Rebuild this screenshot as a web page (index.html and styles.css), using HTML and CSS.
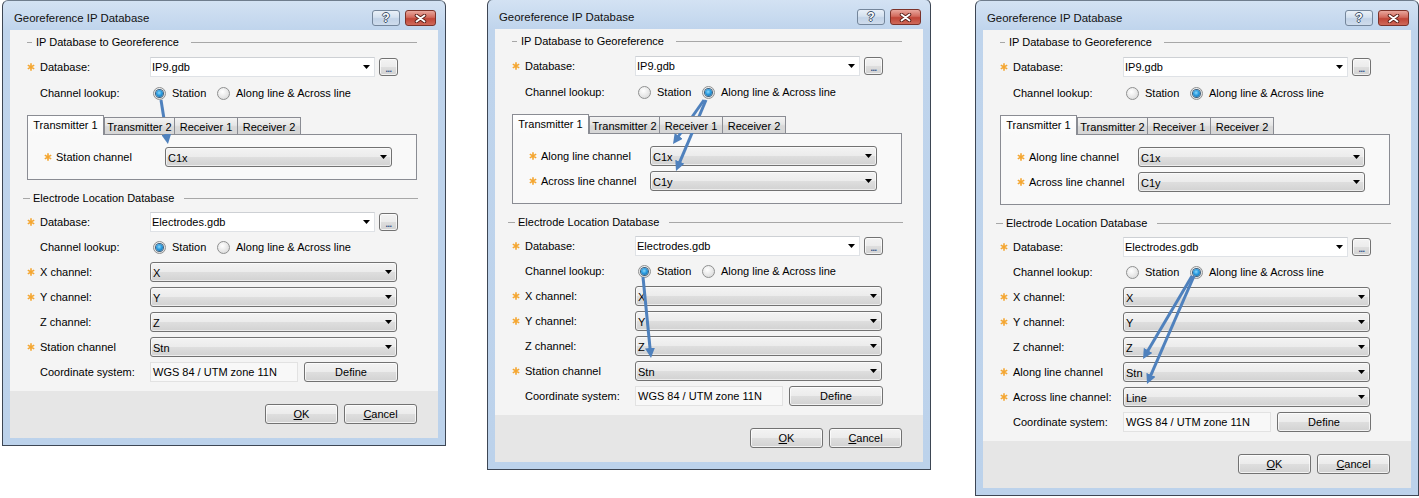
FILE: index.html
```html
<!DOCTYPE html>
<html lang="en">
<head>
<meta charset="utf-8">
<title>Georeference IP Database</title>
<link rel="stylesheet" href="styles.css">
</head>
<body>
<div class="desk">

  <!-- Dialog 1: station lookup everywhere -->
  <section class="win">
    <header class="titlebar">
      <span class="title">Georeference IP Database</span>
      <span class="cap help">?</span>
      <span class="cap close"><svg viewBox="0 0 13 9" width="13" height="9"><path d="M2.5 1.5l8 6M10.5 1.5l-8 6" stroke="#5a1f18" stroke-width="3.6" stroke-linecap="round"/><path d="M2.5 1.5l8 6M10.5 1.5l-8 6" stroke="#fff" stroke-width="1.8" stroke-linecap="round"/></svg></span>
    </header>
    <div class="client">
      <div class="form">
        <div class="group g-a"><span class="dash"></span><span class="gtitle">IP Database to Georeference</span><span class="rule"></span></div>
        <div class="row"><span class="req"><svg viewBox="0 0 8 8" width="8" height="8"><path d="M4 .3v7.4M.8 2.1l6.4 3.8M.8 5.9l6.4-3.8" stroke="#f4a630" stroke-width="1.6"/></svg></span><span class="lbl">Database:</span><span class="combo"><span class="val">IP9.gdb</span><span class="arrow"></span></span><span class="btn more">...</span></div>
        <div class="row lookup-top"><span class="req"></span><span class="lbl">Channel lookup:</span><span class="opt first"><span class="radio on"></span>Station</span><span class="opt"><span class="radio"></span>Along line &amp; Across line</span></div>
        <div class="tabs"><span class="tab active">Transmitter 1</span><span class="tab">Transmitter 2</span><span class="tab r1">Receiver 1</span><span class="tab r2">Receiver 2</span></div>
        <div class="panel">
          <div class="row"><span class="req"><svg viewBox="0 0 8 8" width="8" height="8"><path d="M4 .3v7.4M.8 2.1l6.4 3.8M.8 5.9l6.4-3.8" stroke="#f4a630" stroke-width="1.6"/></svg></span><span class="lbl">Station channel</span><span class="dd"><span class="val">C1x</span><span class="arrow"></span></span></div>
        </div>
        <div class="group g-b"><span class="dash"></span><span class="gtitle">Electrode Location Database</span><span class="rule"></span></div>
        <div class="row"><span class="req"><svg viewBox="0 0 8 8" width="8" height="8"><path d="M4 .3v7.4M.8 2.1l6.4 3.8M.8 5.9l6.4-3.8" stroke="#f4a630" stroke-width="1.6"/></svg></span><span class="lbl">Database:</span><span class="combo"><span class="val">Electrodes.gdb</span><span class="arrow"></span></span><span class="btn more">...</span></div>
        <div class="row"><span class="req"></span><span class="lbl">Channel lookup:</span><span class="opt first"><span class="radio on"></span>Station</span><span class="opt"><span class="radio"></span>Along line &amp; Across line</span></div>
        <div class="row"><span class="req"><svg viewBox="0 0 8 8" width="8" height="8"><path d="M4 .3v7.4M.8 2.1l6.4 3.8M.8 5.9l6.4-3.8" stroke="#f4a630" stroke-width="1.6"/></svg></span><span class="lbl">X channel:</span><span class="dd"><span class="val">X</span><span class="arrow"></span></span></div>
        <div class="row"><span class="req"><svg viewBox="0 0 8 8" width="8" height="8"><path d="M4 .3v7.4M.8 2.1l6.4 3.8M.8 5.9l6.4-3.8" stroke="#f4a630" stroke-width="1.6"/></svg></span><span class="lbl">Y channel:</span><span class="dd"><span class="val">Y</span><span class="arrow"></span></span></div>
        <div class="row"><span class="req"></span><span class="lbl">Z channel:</span><span class="dd"><span class="val">Z</span><span class="arrow"></span></span></div>
        <div class="row"><span class="req"><svg viewBox="0 0 8 8" width="8" height="8"><path d="M4 .3v7.4M.8 2.1l6.4 3.8M.8 5.9l6.4-3.8" stroke="#f4a630" stroke-width="1.6"/></svg></span><span class="lbl">Station channel</span><span class="dd"><span class="val">Stn</span><span class="arrow"></span></span></div>
        <div class="row"><span class="req"></span><span class="lbl">Coordinate system:</span><span class="box">WGS 84 / UTM zone 11N</span><span class="btn define">Define</span></div>
      </div>
      <div class="actions"><span class="btn act"><u>O</u>K</span><span class="btn act"><u>C</u>ancel</span></div>
    </div>
    <svg class="notes" viewBox="0 0 442 444">
      <defs><marker id="head-a" viewBox="0 0 10 10" refX="2" refY="5" markerWidth="10" markerHeight="10" markerUnits="userSpaceOnUse" orient="auto"><path d="M0 0L10 5L0 10z" fill="#4f81bd"/></marker></defs>
      <line x1="158" y1="99" x2="163.7" y2="135.1" stroke="#4f81bd" stroke-width="3" marker-end="url(#head-a)"/>
    </svg>
  </section>

  <!-- Dialog 2: along/across lookup for the IP data -->
  <section class="win w2">
    <header class="titlebar">
      <span class="title">Georeference IP Database</span>
      <span class="cap help">?</span>
      <span class="cap close"><svg viewBox="0 0 13 9" width="13" height="9"><path d="M2.5 1.5l8 6M10.5 1.5l-8 6" stroke="#5a1f18" stroke-width="3.6" stroke-linecap="round"/><path d="M2.5 1.5l8 6M10.5 1.5l-8 6" stroke="#fff" stroke-width="1.8" stroke-linecap="round"/></svg></span>
    </header>
    <div class="client">
      <div class="form">
        <div class="group g-a"><span class="dash"></span><span class="gtitle">IP Database to Georeference</span><span class="rule"></span></div>
        <div class="row"><span class="req"><svg viewBox="0 0 8 8" width="8" height="8"><path d="M4 .3v7.4M.8 2.1l6.4 3.8M.8 5.9l6.4-3.8" stroke="#f4a630" stroke-width="1.6"/></svg></span><span class="lbl">Database:</span><span class="combo"><span class="val">IP9.gdb</span><span class="arrow"></span></span><span class="btn more">...</span></div>
        <div class="row lookup-top"><span class="req"></span><span class="lbl">Channel lookup:</span><span class="opt first"><span class="radio"></span>Station</span><span class="opt"><span class="radio on"></span>Along line &amp; Across line</span></div>
        <div class="tabs"><span class="tab active">Transmitter 1</span><span class="tab">Transmitter 2</span><span class="tab r1">Receiver 1</span><span class="tab r2">Receiver 2</span></div>
        <div class="panel">
          <div class="row"><span class="req"><svg viewBox="0 0 8 8" width="8" height="8"><path d="M4 .3v7.4M.8 2.1l6.4 3.8M.8 5.9l6.4-3.8" stroke="#f4a630" stroke-width="1.6"/></svg></span><span class="lbl">Along line channel</span><span class="dd"><span class="val">C1x</span><span class="arrow"></span></span></div>
          <div class="row"><span class="req"><svg viewBox="0 0 8 8" width="8" height="8"><path d="M4 .3v7.4M.8 2.1l6.4 3.8M.8 5.9l6.4-3.8" stroke="#f4a630" stroke-width="1.6"/></svg></span><span class="lbl">Across line channel</span><span class="dd"><span class="val">C1y</span><span class="arrow"></span></span></div>
        </div>
        <div class="group g-b"><span class="dash"></span><span class="gtitle">Electrode Location Database</span><span class="rule"></span></div>
        <div class="row"><span class="req"><svg viewBox="0 0 8 8" width="8" height="8"><path d="M4 .3v7.4M.8 2.1l6.4 3.8M.8 5.9l6.4-3.8" stroke="#f4a630" stroke-width="1.6"/></svg></span><span class="lbl">Database:</span><span class="combo"><span class="val">Electrodes.gdb</span><span class="arrow"></span></span><span class="btn more">...</span></div>
        <div class="row"><span class="req"></span><span class="lbl">Channel lookup:</span><span class="opt first"><span class="radio on"></span>Station</span><span class="opt"><span class="radio"></span>Along line &amp; Across line</span></div>
        <div class="row"><span class="req"><svg viewBox="0 0 8 8" width="8" height="8"><path d="M4 .3v7.4M.8 2.1l6.4 3.8M.8 5.9l6.4-3.8" stroke="#f4a630" stroke-width="1.6"/></svg></span><span class="lbl">X channel:</span><span class="dd"><span class="val">X</span><span class="arrow"></span></span></div>
        <div class="row"><span class="req"><svg viewBox="0 0 8 8" width="8" height="8"><path d="M4 .3v7.4M.8 2.1l6.4 3.8M.8 5.9l6.4-3.8" stroke="#f4a630" stroke-width="1.6"/></svg></span><span class="lbl">Y channel:</span><span class="dd"><span class="val">Y</span><span class="arrow"></span></span></div>
        <div class="row"><span class="req"></span><span class="lbl">Z channel:</span><span class="dd"><span class="val">Z</span><span class="arrow"></span></span></div>
        <div class="row"><span class="req"><svg viewBox="0 0 8 8" width="8" height="8"><path d="M4 .3v7.4M.8 2.1l6.4 3.8M.8 5.9l6.4-3.8" stroke="#f4a630" stroke-width="1.6"/></svg></span><span class="lbl">Station channel</span><span class="dd"><span class="val">Stn</span><span class="arrow"></span></span></div>
        <div class="row"><span class="req"></span><span class="lbl">Coordinate system:</span><span class="box">WGS 84 / UTM zone 11N</span><span class="btn define">Define</span></div>
      </div>
      <div class="actions"><span class="btn act"><u>O</u>K</span><span class="btn act"><u>C</u>ancel</span></div>
    </div>
    <svg class="notes" viewBox="0 0 442 469">
      <defs><marker id="head-b" viewBox="0 0 10 10" refX="2" refY="5" markerWidth="10" markerHeight="10" markerUnits="userSpaceOnUse" orient="auto"><path d="M0 0L10 5L0 10z" fill="#4f81bd"/></marker></defs>
      <line x1="216" y1="100" x2="189.6" y2="137.5" stroke="#4f81bd" stroke-width="3" marker-end="url(#head-b)"/>
      <line x1="218" y1="100" x2="191.1" y2="163.6" stroke="#4f81bd" stroke-width="3" marker-end="url(#head-b)"/>
      <line x1="155" y1="277" x2="162.2" y2="350" stroke="#4f81bd" stroke-width="3" marker-end="url(#head-b)"/>
    </svg>
  </section>

  <!-- Dialog 3: along/across lookup for both databases -->
  <section class="win w3">
    <header class="titlebar">
      <span class="title">Georeference IP Database</span>
      <span class="cap help">?</span>
      <span class="cap close"><svg viewBox="0 0 13 9" width="13" height="9"><path d="M2.5 1.5l8 6M10.5 1.5l-8 6" stroke="#5a1f18" stroke-width="3.6" stroke-linecap="round"/><path d="M2.5 1.5l8 6M10.5 1.5l-8 6" stroke="#fff" stroke-width="1.8" stroke-linecap="round"/></svg></span>
    </header>
    <div class="client">
      <div class="form">
        <div class="group g-a"><span class="dash"></span><span class="gtitle">IP Database to Georeference</span><span class="rule"></span></div>
        <div class="row"><span class="req"><svg viewBox="0 0 8 8" width="8" height="8"><path d="M4 .3v7.4M.8 2.1l6.4 3.8M.8 5.9l6.4-3.8" stroke="#f4a630" stroke-width="1.6"/></svg></span><span class="lbl">Database:</span><span class="combo"><span class="val">IP9.gdb</span><span class="arrow"></span></span><span class="btn more">...</span></div>
        <div class="row lookup-top"><span class="req"></span><span class="lbl">Channel lookup:</span><span class="opt first"><span class="radio"></span>Station</span><span class="opt"><span class="radio on"></span>Along line &amp; Across line</span></div>
        <div class="tabs"><span class="tab active">Transmitter 1</span><span class="tab">Transmitter 2</span><span class="tab r1">Receiver 1</span><span class="tab r2">Receiver 2</span></div>
        <div class="panel">
          <div class="row"><span class="req"><svg viewBox="0 0 8 8" width="8" height="8"><path d="M4 .3v7.4M.8 2.1l6.4 3.8M.8 5.9l6.4-3.8" stroke="#f4a630" stroke-width="1.6"/></svg></span><span class="lbl">Along line channel</span><span class="dd"><span class="val">C1x</span><span class="arrow"></span></span></div>
          <div class="row"><span class="req"><svg viewBox="0 0 8 8" width="8" height="8"><path d="M4 .3v7.4M.8 2.1l6.4 3.8M.8 5.9l6.4-3.8" stroke="#f4a630" stroke-width="1.6"/></svg></span><span class="lbl">Across line channel</span><span class="dd"><span class="val">C1y</span><span class="arrow"></span></span></div>
        </div>
        <div class="group g-b"><span class="dash"></span><span class="gtitle">Electrode Location Database</span><span class="rule"></span></div>
        <div class="row"><span class="req"><svg viewBox="0 0 8 8" width="8" height="8"><path d="M4 .3v7.4M.8 2.1l6.4 3.8M.8 5.9l6.4-3.8" stroke="#f4a630" stroke-width="1.6"/></svg></span><span class="lbl">Database:</span><span class="combo"><span class="val">Electrodes.gdb</span><span class="arrow"></span></span><span class="btn more">...</span></div>
        <div class="row"><span class="req"></span><span class="lbl">Channel lookup:</span><span class="opt first"><span class="radio"></span>Station</span><span class="opt"><span class="radio on"></span>Along line &amp; Across line</span></div>
        <div class="row"><span class="req"><svg viewBox="0 0 8 8" width="8" height="8"><path d="M4 .3v7.4M.8 2.1l6.4 3.8M.8 5.9l6.4-3.8" stroke="#f4a630" stroke-width="1.6"/></svg></span><span class="lbl">X channel:</span><span class="dd"><span class="val">X</span><span class="arrow"></span></span></div>
        <div class="row"><span class="req"><svg viewBox="0 0 8 8" width="8" height="8"><path d="M4 .3v7.4M.8 2.1l6.4 3.8M.8 5.9l6.4-3.8" stroke="#f4a630" stroke-width="1.6"/></svg></span><span class="lbl">Y channel:</span><span class="dd"><span class="val">Y</span><span class="arrow"></span></span></div>
        <div class="row"><span class="req"></span><span class="lbl">Z channel:</span><span class="dd"><span class="val">Z</span><span class="arrow"></span></span></div>
        <div class="row"><span class="req"><svg viewBox="0 0 8 8" width="8" height="8"><path d="M4 .3v7.4M.8 2.1l6.4 3.8M.8 5.9l6.4-3.8" stroke="#f4a630" stroke-width="1.6"/></svg></span><span class="lbl">Along line channel</span><span class="dd"><span class="val">Stn</span><span class="arrow"></span></span></div>
        <div class="row"><span class="req"><svg viewBox="0 0 8 8" width="8" height="8"><path d="M4 .3v7.4M.8 2.1l6.4 3.8M.8 5.9l6.4-3.8" stroke="#f4a630" stroke-width="1.6"/></svg></span><span class="lbl">Across line channel:</span><span class="dd"><span class="val">Line</span><span class="arrow"></span></span></div>
        <div class="row"><span class="req"></span><span class="lbl">Coordinate system:</span><span class="box">WGS 84 / UTM zone 11N</span><span class="btn define">Define</span></div>
      </div>
      <div class="actions"><span class="btn act"><u>O</u>K</span><span class="btn act"><u>C</u>ancel</span></div>
    </div>
    <svg class="notes" viewBox="0 0 442 494">
      <defs><marker id="head-c" viewBox="0 0 10 10" refX="2" refY="5" markerWidth="10" markerHeight="10" markerUnits="userSpaceOnUse" orient="auto"><path d="M0 0L10 5L0 10z" fill="#4f81bd"/></marker></defs>
      <line x1="216" y1="275" x2="171.1" y2="351.1" stroke="#4f81bd" stroke-width="3" marker-end="url(#head-c)"/>
      <line x1="218" y1="275" x2="174.2" y2="375.7" stroke="#4f81bd" stroke-width="3" marker-end="url(#head-c)"/>
    </svg>
  </section>

</div>
</body>
</html>
```

FILE: styles.css
```css
html, body {
  margin: 0;
  padding: 0;
  background: #fff;
}

body {
  font-family: "Liberation Sans", Arial, sans-serif;
  font-size: 11px;
  color: #000;
  overflow: hidden;
}

.desk {
  display: flex;
  align-items: flex-start;
  padding-left: 2px;
}

/* window chrome */
.win {
  position: relative;
  width: 444px;
  box-sizing: border-box;
  border: 1px solid #3d4654;
  border-top-color: #6f7d8d;
  border-radius: 6px 6px 0 0;
  padding: 0 7px 7px;
  background: linear-gradient(#d3e2f3, #bfd4ec 30px, #bcd2eb);
}

.w2 {
  margin-left: 41px;
  margin-top: -1px;
}

.w3 {
  margin-left: 44px;
}

.titlebar {
  height: 29px;
  box-sizing: border-box;
  padding: 5px 2px 0 4px;
  display: flex;
  align-items: center;
}

.title {
  font-size: 11.4px;
  color: #111;
  flex: 1;
}

.cap {
  height: 16px;
  box-sizing: border-box;
  border-radius: 3px;
  display: flex;
  align-items: center;
  justify-content: center;
}

.help {
  width: 28px;
  border: 1px solid #74869b;
  background: linear-gradient(#e9f0f8, #d4e1ef 45%, #c2d3e7 55%, #cfdcec);
  color: #fff;
  font-weight: bold;
  font-size: 12px;
  text-shadow: -1px 0 #3e5168, 1px 0 #3e5168, 0 -1px #3e5168, 0 1px #3e5168;
}

.close {
  width: 31px;
  margin-left: 5px;
  border: 1px solid #7c3229;
  background: linear-gradient(#e9a79d, #d26a5d 45%, #c04537 55%, #cf6a5a);
}

/* client area */
.client {
  background: #f4f4f4;
}

.form {
  display: flex;
  flex-direction: column;
  padding: 5px 0 9px;
}

.group {
  height: 14px;
  display: flex;
  align-items: center;
}

.dash, .rule {
  height: 1px;
  background: #a7a7a7;
}

.g-a .dash { margin-left: 17px; width: 5px; }
.g-a .gtitle { margin-left: 4px; }
.g-a .rule { flex: 1; margin: 0 21px 0 12px; }

.g-b { margin-top: 11px; }
.g-b .dash { margin-left: 13px; width: 7px; }
.g-b .gtitle { margin-left: 3px; }
.g-b .rule { flex: 1; margin: 0 20px 0 10px; }

.row {
  height: 20px;
  display: flex;
  align-items: center;
  padding-left: 17px;
  margin-top: 5px;
}

.g-a + .row { margin-top: 8px; }
.g-b + .row { margin-top: 7px; }
.lookup-top { margin-top: 6px; }

.req {
  width: 13px;
  flex: none;
  display: flex;
  align-items: center;
}

.lbl {
  width: 110px;
  flex: none;
  white-space: nowrap;
}

/* editable combo */
.combo {
  width: 225px;
  height: 20px;
  box-sizing: border-box;
  background: #fff;
  border: 1px solid #dfe2e6;
  border-top-color: #cdd0d4;
  display: flex;
  align-items: center;
  padding: 0 4px 0 1px;
}

.val {
  flex: 1;
  white-space: nowrap;
}

.arrow {
  width: 7px;
  height: 4px;
  background: #000;
  clip-path: polygon(0 0, 100% 0, 50% 100%);
}

/* drop-down list */
.dd {
  width: 247px;
  height: 20px;
  box-sizing: border-box;
  border: 1px solid #727272;
  border-radius: 3px;
  background: linear-gradient(#f3f3f3, #ececec 48%, #dedede 52%, #d2d2d2);
  box-shadow: inset 0 0 0 1px rgba(255, 255, 255, 0.6);
  display: flex;
  align-items: center;
  padding: 1px 4px 0 2px;
}

.dd .arrow { margin-top: -1px; }

/* push buttons */
.btn {
  box-sizing: border-box;
  border: 1px solid #727272;
  border-radius: 3px;
  background: linear-gradient(#f3f3f3, #ececec 48%, #dedede 52%, #d2d2d2);
  box-shadow: inset 0 0 0 1px rgba(255, 255, 255, 0.7);
  display: flex;
  align-items: center;
  justify-content: center;
}

.more {
  width: 19px;
  height: 18px;
  margin-left: 4px;
  font-size: 9px;
  font-weight: bold;
  color: #2f4f86;
  padding-top: 3px;
  letter-spacing: -0.5px;
}

.define {
  width: 94px;
  height: 20px;
  margin-left: 6px;
}

.box {
  width: 148px;
  height: 20px;
  box-sizing: border-box;
  border: 1px solid #e2e2e2;
  background: #f8f8f8;
  display: flex;
  align-items: center;
  padding-left: 2px;
}

/* radio options */
.opt {
  display: flex;
  align-items: center;
  gap: 6px;
  white-space: nowrap;
}

.opt.first {
  margin-left: 3px;
  width: 64px;
}

.radio {
  width: 13px;
  height: 13px;
  box-sizing: border-box;
  border-radius: 50%;
  border: 1px solid #8f9090;
  background: radial-gradient(circle at 40% 35%, #ffffff 0, #f0f0f0 35%, #d3d3d3 100%);
  display: grid;
  place-items: center;
}

.radio.on::after {
  content: "";
  width: 7px;
  height: 7px;
  border-radius: 50%;
  background: radial-gradient(circle at 45% 40%, #8ad8fb 0, #2a9be0 45%, #0d5a92 100%);
  box-shadow: 0 0 0 1px #3d5f7c;
}

/* tabs */
.tabs {
  display: flex;
  align-items: flex-end;
  height: 20px;
  margin: 12px 0 -1px 17px;
  position: relative;
  z-index: 1;
}

.tab {
  box-sizing: border-box;
  height: 17px;
  margin-bottom: 1px;
  border: 1px solid #8a8c93;
  border-bottom: none;
  background: linear-gradient(#f3f3f3, #e6e6e6 45%, #d9d9d9 55%, #d6d6d6);
  display: flex;
  align-items: center;
  justify-content: center;
  padding-top: 1px;
  width: 71px;
}

.tab.active {
  width: 77px;
  height: 20px;
  margin-bottom: 0;
  background: linear-gradient(#ffffff, #fbfbfb 60%, #f9f9f9);
  padding-top: 0;
  padding-bottom: 2px;
}

.tab.r1 { width: 64px; margin-left: -1px; }
.tab.r2 { width: 64px; margin-left: -1px; }

.panel {
  margin: 0 21px 0 17px;
  border: 1px solid #8a8c93;
  background: #f9f9f9;
  padding: 12px 0;
}

.panel .row {
  padding-left: 16px;
}

.panel .row:first-child { margin-top: 0; }
.panel .req { width: 12px; }
.panel .lbl { width: 109px; }
.panel .dd { width: 227px; }

/* bottom button strip */
.actions {
  height: 47px;
  box-sizing: border-box;
  background: #e6e6e6;
  display: flex;
  justify-content: flex-end;
  align-items: flex-start;
  gap: 6px;
  padding: 13px 21px 0 0;
}

.act {
  width: 73px;
  height: 20px;
}

.act u { text-decoration-thickness: 1px; text-underline-offset: 1px; }

/* annotation arrows drawn over the dialog */
.notes {
  position: absolute;
  left: 0;
  top: 0;
  width: 442px;
  height: 100%;
  pointer-events: none;
  overflow: visible;
}
```
